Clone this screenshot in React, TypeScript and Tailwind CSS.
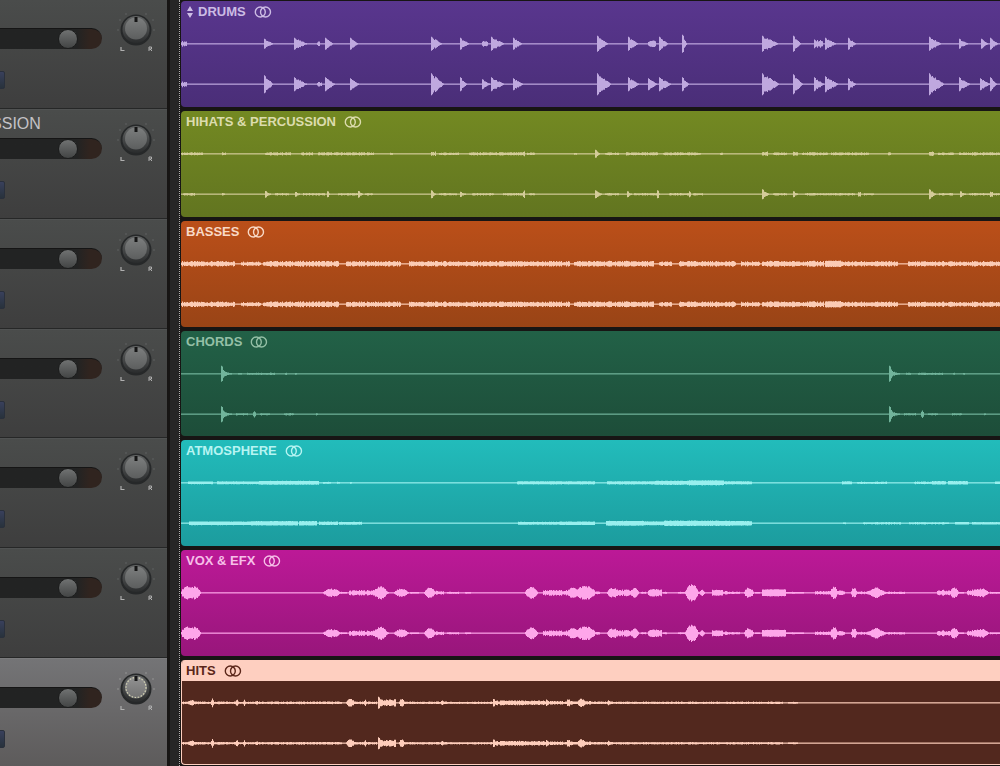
import React, { useState } from 'react';

type Shape = 'hit' | 'blob' | 'hum' | 'pad';

// [x, width, half height, shape]
type Burst = [number, number, number, Shape];

interface Track {
  id: string;
  name: string;
  mixerLabel?: string;
  rowHeight: string;
  region: string;
  header: string;
  wave: string;
  left: Burst[];
  right: Burst[];
  grouped?: boolean;
  selected?: boolean;
}

const basses: Burst[] = [
  [0, 54, 2.8, 'hum'], [60, 20, 2.6, 'hum'], [82, 76, 3, 'hum'], [165, 55, 2.8, 'hum'],
  [228, 161, 2.8, 'hum'], [393, 80, 3, 'hum'], [478, 13, 2.4, 'hum'], [498, 57, 2.9, 'hum'],
  [560, 19, 2.6, 'hum'], [581, 62, 3, 'hum'], [644, 16, 3.2, 'pad'], [660, 57, 2.7, 'hum'],
  [727, 94, 2.7, 'hum'],
];

const vox: Burst[] = [
  [0, 13, 7, 'blob'], [7, 13, 6, 'blob'], [142, 18, 4, 'blob'], [160, 6, 1, 'hum'], [168, 25, 2.8, 'hum'],
  [188, 20, 4, 'blob'], [194, 12, 7, 'blob'], [213, 15, 4, 'blob'], [229, 9, 1, 'hum'], [243, 12, 5, 'blob'],
  [255, 8, 2, 'hum'], [266, 12, 1.2, 'hum'], [284, 6, 1, 'hum'], [344, 13, 6, 'blob'], [362, 28, 3, 'hum'],
  [387, 11, 6, 'blob'], [394, 21, 7, 'blob'], [414, 5, 1.5, 'hum'], [426, 13, 5, 'blob'], [438, 16, 3.4, 'hum'],
  [450, 8, 5, 'blob'], [460, 5, 1, 'hum'], [467, 14, 4, 'hum'], [482, 4, 1, 'hum'], [497, 7, 1, 'hum'],
  [504, 14, 8, 'blob'], [518, 6, 3, 'blob'], [531, 11, 3, 'pad'], [542, 5, 2, 'hum'], [544, 15, 1.2, 'hum'],
  [563, 10, 5, 'blob'], [574, 5, 1, 'hum'], [581, 24, 3.6, 'pad'], [605, 18, 1, 'hum'], [634, 15, 2, 'hum'],
  [649, 8, 6, 'blob'], [657, 7, 2.4, 'hum'], [670, 6, 5, 'blob'], [676, 8, 1.5, 'hum'], [684, 22, 3.4, 'blob'],
  [688, 14, 5, 'blob'], [706, 18, 1.2, 'hum'], [756, 13, 3, 'hum'], [769, 9, 5.4, 'blob'], [778, 5, 1, 'hum'],
  [786, 9, 3.4, 'hum'], [792, 16, 4.4, 'blob'], [809, 14, 1, 'hum'],
];

const hits: Burst[] = [
  [0, 160, 1.4, 'hum'], [5, 9, 2.6, 'blob'], [29, 3, 4, 'blob'], [53, 4, 3, 'blob'], [61, 3, 3, 'blob'],
  [72, 5, 2, 'blob'], [164, 9, 4, 'blob'], [173, 22, 1.4, 'hum'], [182, 3, 3, 'blob'], [196, 9, 6, 'hit'],
  [199, 10, 3.4, 'hum'], [209, 5, 4, 'hum'], [217, 6, 4, 'blob'], [223, 42, 1.3, 'hum'], [258, 5, 2.4, 'blob'],
  [265, 46, 1.2, 'hum'], [311, 2, 5, 'blob'], [313, 54, 2.5, 'hum'], [363, 4, 3.4, 'blob'], [367, 18, 1.8, 'hum'],
  [384, 5, 3.6, 'blob'], [389, 20, 2, 'hum'], [395, 9, 4, 'blob'], [409, 24, 1.4, 'hum'], [425, 3, 2.6, 'blob'],
  [433, 168, 1.2, 'hum'], [606, 10, 1, 'hum'],
];

const tracks: Track[] = [
  {
    id: 'drums',
    name: 'DRUMS',
    grouped: true,
    rowHeight: 'h-[110px]',
    region: 'bg-linear-to-b from-[#59368e] to-[#4a2e78]',
    header: 'pl-[5px] text-[#ccbce4]',
    wave: 'text-[#bfa8df]',
    left: [
      [0, 6, 3, 'hum'], [83, 9, 5, 'hit'], [113, 13, 6, 'hit'], [136, 3, 2.4, 'hum'], [144, 8, 6, 'hit'],
      [169, 8, 6, 'hit'], [250, 11, 7, 'hit'], [279, 9, 6, 'hit'], [301, 6, 3, 'hum'], [310, 13, 7, 'hit'],
      [332, 9, 6, 'hit'], [416, 11, 8, 'hit'], [447, 10, 7, 'hit'], [467, 8, 3.4, 'hum'], [478, 9, 7, 'hit'],
      [501, 5, 9, 'hit'], [581, 16, 8, 'hit'], [612, 8, 8, 'hit'], [633, 9, 4.4, 'hum'], [644, 11, 6, 'hit'],
      [667, 8, 6, 'hit'], [748, 12, 7, 'hit'], [778, 9, 5, 'hit'], [800, 7, 5, 'hit'], [809, 8, 6, 'hit'],
    ],
    right: [
      [0, 6, 3, 'hum'], [83, 9, 9, 'hit'], [113, 13, 7, 'hit'], [136, 5, 2.4, 'hum'], [144, 10, 7, 'hit'],
      [169, 9, 6, 'hit'], [250, 13, 11, 'hit'], [279, 7, 7, 'hit'], [301, 8, 5, 'hit'], [310, 13, 7, 'hit'],
      [332, 10, 6, 'hit'], [416, 14, 11, 'hit'], [447, 11, 7, 'hit'], [467, 9, 6, 'hit'], [478, 12, 7, 'hit'],
      [501, 7, 7, 'hit'], [581, 17, 11, 'hit'], [612, 10, 10, 'hit'], [633, 10, 7, 'hit'], [644, 13, 8, 'hit'],
      [667, 8, 6, 'hit'], [748, 15, 11, 'hit'], [778, 11, 7, 'hit'], [799, 10, 6, 'hit'], [809, 7, 7, 'hit'],
    ],
  },
  {
    id: 'hihats',
    name: 'HIHATS & PERCUSSION',
    mixerLabel: 'HIHATS & PERCUSSION',
    rowHeight: 'h-[110px]',
    region: 'bg-linear-to-b from-[#738922] to-[#627520]',
    header: 'pl-[5px] text-[#dcdcae]',
    wave: 'text-[#d3cb98]',
    left: [
      [0, 22, 1.5, 'hum'], [41, 4, 1.5, 'hum'], [84, 26, 1.6, 'hum'], [120, 12, 1.6, 'hum'], [137, 56, 1.6, 'hum'],
      [209, 3, 1.4, 'hum'], [250, 5, 2.2, 'hum'], [258, 20, 1.4, 'hum'], [288, 54, 1.6, 'hum'], [342, 2, 2.6, 'hum'],
      [346, 8, 1.4, 'hum'], [393, 3, 1.4, 'hum'], [414, 5, 4, 'hit'], [424, 14, 1.4, 'hum'], [445, 32, 1.6, 'hum'],
      [482, 38, 1.5, 'hum'], [539, 3, 1.6, 'hum'], [581, 6, 2.4, 'hum'], [592, 14, 1.4, 'hum'], [612, 5, 2.2, 'hum'],
      [621, 26, 1.6, 'hum'], [650, 38, 1.5, 'hum'], [707, 3, 1.6, 'hum'], [748, 5, 2.6, 'hum'], [757, 16, 1.4, 'hum'],
      [778, 42, 1.6, 'hum'],
    ],
    right: [
      [2, 12, 1.4, 'hum'], [41, 3, 1.4, 'hum'], [84, 6, 3.4, 'hit'], [94, 14, 1.2, 'hum'], [114, 5, 2.4, 'hit'],
      [122, 22, 1.2, 'hum'], [146, 3, 3, 'hit'], [157, 20, 1.2, 'hum'], [177, 5, 3.4, 'hit'], [184, 8, 1.2, 'hum'],
      [250, 5, 4, 'hit'], [258, 18, 1.2, 'hum'], [279, 6, 2.6, 'hit'], [291, 22, 1.2, 'hum'], [322, 20, 1.2, 'hum'],
      [342, 2, 4, 'hum'], [348, 6, 1.2, 'hum'], [414, 7, 4, 'hit'], [424, 14, 1.2, 'hum'], [446, 5, 3, 'hit'],
      [453, 24, 1.2, 'hum'], [476, 3, 4, 'hit'], [488, 20, 1.2, 'hum'], [508, 2, 3, 'hum'], [512, 10, 1.2, 'hum'],
      [581, 7, 5, 'hit'], [592, 14, 1.2, 'hum'], [612, 5, 3, 'hit'], [624, 50, 1.2, 'hum'], [677, 3, 3, 'hum'],
      [683, 10, 1.2, 'hum'], [748, 7, 5, 'hit'], [758, 14, 1.2, 'hum'], [779, 6, 3, 'hit'], [788, 32, 1.2, 'hum'],
      [809, 3, 2.6, 'hum'],
    ],
  },
  {
    id: 'basses',
    name: 'BASSES',
    rowHeight: 'h-[110px]',
    region: 'bg-linear-to-b from-[#bb4f19] to-[#994416]',
    header: 'pl-[5px] text-[#f8d9c6]',
    wave: 'text-[#fbcbb4]',
    left: basses,
    right: basses,
  },
  {
    id: 'chords',
    name: 'CHORDS',
    rowHeight: 'h-[109px]',
    region: 'bg-linear-to-b from-[#226147] to-[#1d4d39]',
    header: 'pl-[5px] text-[#94bfa6]',
    wave: 'text-[#71b49b]',
    left: [
      [40, 5, 8, 'hit'], [42, 9, 3, 'hit'], [57, 4, 1.2, 'hum'], [66, 28, 1.2, 'hum'], [104, 2, 1.2, 'hum'], [114, 2, 1.2, 'hum'],
      [708, 5, 8, 'hit'], [710, 9, 3, 'hit'], [725, 5, 1.2, 'hum'], [737, 25, 1.2, 'hum'], [772, 2, 1.2, 'hum'], [782, 2, 1.2, 'hum'],
    ],
    right: [
      [40, 5, 8, 'hit'], [42, 9, 3, 'hit'], [55, 12, 1.2, 'hum'], [72, 3, 4, 'blob'], [79, 10, 1.2, 'hum'], [103, 10, 1.2, 'hum'],
      [135, 2, 1.2, 'hum'], [708, 5, 8, 'hit'], [710, 9, 3, 'hit'], [723, 12, 1.2, 'hum'], [740, 3, 4, 'blob'],
      [747, 10, 1.2, 'hum'], [771, 10, 1.2, 'hum'], [803, 2, 1.2, 'hum'],
    ],
  },
  {
    id: 'atmosphere',
    name: 'ATMOSPHERE',
    rowHeight: 'h-[110px]',
    region: 'bg-linear-to-b from-[#22bcbb] to-[#1c9c9e]',
    header: 'pl-[5px] text-[#b6f4f2]',
    wave: 'text-[#98efee]',
    left: [
      [7, 25, 1.4, 'pad'], [36, 42, 1.5, 'pad'], [78, 60, 2, 'pad'], [142, 8, 1, 'hum'], [156, 3, 1, 'hum'], [169, 2, 1, 'hum'],
      [336, 78, 1.6, 'pad'], [426, 50, 1.6, 'pad'], [474, 34, 2.1, 'pad'], [508, 35, 2.6, 'pad'], [543, 28, 1.6, 'pad'],
      [661, 10, 1.6, 'pad'], [676, 30, 1.2, 'hum'], [733, 20, 1.4, 'hum'], [751, 14, 1.8, 'pad'], [767, 20, 1.8, 'pad'],
      [814, 8, 1.4, 'pad'],
    ],
    right: [
      [8, 62, 1.9, 'pad'], [70, 47, 2.3, 'pad'], [118, 18, 2.3, 'pad'], [138, 19, 1.7, 'pad'], [158, 23, 1.5, 'pad'],
      [337, 42, 1.5, 'pad'], [379, 35, 1.8, 'pad'], [425, 38, 2.5, 'pad'], [463, 20, 2, 'pad'], [483, 66, 2.7, 'pad'],
      [549, 22, 2.4, 'pad'], [662, 3, 1, 'hum'], [682, 38, 1.2, 'hum'], [728, 40, 1.2, 'hum'], [774, 14, 1.4, 'pad'],
      [791, 30, 1.2, 'pad'],
    ],
  },
  {
    id: 'vox',
    name: 'VOX & EFX',
    rowHeight: 'h-[110px]',
    region: 'bg-linear-to-b from-[#bc1997] to-[#98167b]',
    header: 'pl-[5px] text-[#f6bfe8]',
    wave: 'text-[#fea6ea]',
    left: vox,
    right: vox,
  },
  {
    id: 'hits',
    name: 'HITS',
    selected: true,
    rowHeight: 'h-[110px]',
    region: 'border-b border-l border-[#fecfc0] bg-[#52281e]',
    header: 'bg-[#fecfc0] pl-1 text-[#5a2619]',
    wave: 'text-[#fecdbb]',
    left: hits,
    right: hits,
  },
];

// Repeatable noise, so a waveform looks the same on every render
const noise = (n: number) => {
  const v = Math.sin(n * 12.9898) * 43758.5453;
  return v - Math.floor(v);
};

const amplitude = (shape: Shape, t: number, i: number, seed: number) => {
  if (shape === 'hit') {
    return i < 2 ? 1 - i * 0.1 : Math.pow(1 - t, 0.8) * (0.7 + 0.3 * noise(seed));
  }
  if (shape === 'blob') {
    return Math.pow(Math.sin(Math.PI * t), 0.7) * (0.75 + 0.35 * noise(seed));
  }
  if (shape === 'pad') {
    return 0.85 + 0.15 * noise(seed);
  }
  return 0.5 + 0.5 * noise(seed);
};

const wavePath = (bursts: Burst[], y: number) => {
  let d = '';
  bursts.forEach(([x, width, size, shape]) => {
    for (let i = 0; i < width; i++) {
      const a = Math.max(0.8, size * amplitude(shape, (i + 0.5) / width, i, x + i));
      d += `M${x + i} ${(y - a).toFixed(1)}h1v${(a * 2).toFixed(1)}h-1z`;
    }
  });
  return d;
};

const StereoIcon: React.FC = () => (
  <svg className="h-3 w-[18px]" viewBox="0 0 18 12" fill="none" stroke="currentColor" strokeWidth="1.4" aria-hidden="true">
    <circle cx="6.300" cy="6" r="5" />
    <circle cx="11.500" cy="6" r="5" />
  </svg>
);

const GroupIcon: React.FC = () => (
  <svg className="mr-1 h-3 w-2" viewBox="0 0 8 12" fill="currentColor" aria-hidden="true">
    <path d="M4 0L7 5H1zM4 12L1 7h6z" />
  </svg>
);

const PanKnob: React.FC<{ track: Track }> = ({ track }) => (
  <button type="button" aria-label={`${track.name} pan`} className="h-[42px] w-10 shrink-0">
    <svg className="h-[42px] w-10" viewBox="0 0 40 42">
      <defs>
        <linearGradient id={`rim-${track.id}`} x1="0" y1="0" x2="0" y2="1">
          <stop offset="0" stopColor="#626464" />
          <stop offset="1" stopColor="#2a2c2d" />
        </linearGradient>
        <linearGradient id={`face-${track.id}`} x1="0" y1="0" x2="0" y2="1">
          <stop offset="0" stopColor={track.selected ? '#929292' : '#7c7e7e'} />
          <stop offset="1" stopColor={track.selected ? '#727272' : '#5c5e5e'} />
        </linearGradient>
      </defs>
      <g fill={track.selected ? '#9a9a9a' : '#636565'}>
        <circle cx="4" cy="9" r="0.8" />
        <circle cx="10" cy="3" r="0.8" />
        <circle cx="30" cy="3" r="0.8" />
        <circle cx="37" cy="9" r="0.8" />
        <circle cx="38" cy="19" r="0.8" />
        <circle cx="2" cy="19" r="0.8" />
      </g>
      <circle cx="20" cy="19" r="15.5" fill="#262829" />
      <circle cx="20" cy="18.500" r="13.5" fill={`url(#rim-${track.id})`} />
      <circle cx="20" cy="17.500" r="11" fill={`url(#face-${track.id})`} />
      {track.selected && (
        <circle cx="20" cy="17.500" r="10" fill="none" stroke="#d4d4b4" strokeWidth="1.2" strokeDasharray="1.5 1.6" />
      )}
      <path d="M18.5 6h3v5h-3z" fill="#151515" />
      <path d="M5 36v3.500h3.500" fill="none" stroke="#b0b0b0" strokeWidth="1.2" />
      <path d="M33 40v-4h2.500v2h-2.500M34 38l2 2" fill="none" stroke="#b0b0b0" strokeWidth="1" />
    </svg>
  </button>
);

const MixerRow: React.FC<{ track: Track }> = ({ track }) => {
  const [volume, setVolume] = useState(114);

  return (
    <div
      className={`flex shrink-0 justify-end overflow-hidden border-t border-b border-b-[#262727] bg-linear-to-b ${track.rowHeight} ${
        track.selected ? 'border-t-[#7b7b7d] from-[#747476] to-[#5d5b5b]' : 'border-t-[#505252] from-[#4a4c4b] to-[#3e3e3e]'
      }`}
    >
      <div className="flex w-[250px] shrink-0 flex-col">
        <div className="mt-1 h-5 pl-1.5 text-base leading-5 whitespace-nowrap text-[#c4c2c6]">{track.mixerLabel}</div>
        <input
          type="range"
          min={0}
          max={127}
          value={volume}
          onChange={(e) => setVolume(Number(e.target.value))}
          aria-label={`${track.name} volume`}
          className="mt-1 block h-[21px] w-full appearance-none rounded-full border-t border-[#151515] bg-linear-to-r from-[#222323] from-90% to-[#30241f] to-95% [&::-webkit-slider-thumb]:h-5 [&::-webkit-slider-thumb]:w-5 [&::-webkit-slider-thumb]:appearance-none [&::-webkit-slider-thumb]:rounded-full [&::-webkit-slider-thumb]:border [&::-webkit-slider-thumb]:border-[#1c1d1d] [&::-webkit-slider-thumb]:bg-linear-to-b [&::-webkit-slider-thumb]:from-[#707272] [&::-webkit-slider-thumb]:to-[#434545]"
        />
        <button
          type="button"
          aria-label={`${track.name} input`}
          className="mt-[22px] mr-[97px] h-[18px] w-5 self-end rounded-xs border border-[#2a303c] bg-linear-to-b from-[#39405c] to-[#28323c]"
        />
      </div>
      <div className="shrink-0 pt-[11px] pr-[11px] pl-[14px]">
        <PanKnob track={track} />
      </div>
    </div>
  );
};

const Region: React.FC<{ track: Track }> = ({ track }) => (
  <div className={`shrink-0 pb-1 ${track.selected ? 'h-[109px]' : track.rowHeight}`}>
    <div className={`flex h-full flex-col overflow-hidden rounded-l ${track.region}`}>
      <div className={`flex h-[21px] shrink-0 items-center text-[13px] leading-5 font-bold ${track.header}`}>
        {track.grouped && <GroupIcon />}
        <span className="mr-2">{track.name}</span>
        <StereoIcon />
      </div>
      <svg className={`h-[84px] w-full shrink-0 ${track.wave}`} fill="currentColor" aria-hidden="true">
        <rect x="0" y="21" width="100%" height="1.600" opacity="0.750" />
        <rect x="0" y="61.400" width="100%" height="1.600" opacity="0.750" />
        <path d={wavePath(track.left, 21.8)} />
        <path d={wavePath(track.right, 62.3)} />
      </svg>
    </div>
  </div>
);

const App: React.FC = () => {
  return (
    <div className="flex h-screen overflow-hidden bg-[#171514] font-['Liberation_Sans',Arial,sans-serif]">
      <aside className="-mt-px flex w-[167px] shrink-0 flex-col">
        {tracks.map((track) => (
          <MixerRow key={track.id} track={track} />
        ))}
      </aside>
      <div className="ml-[3px] w-[9px] shrink-0 bg-[#262626]" />
      <main className="flex min-w-0 flex-1 flex-col border-l border-dotted border-[#b4b4b4] pt-px pl-px">
        {tracks.map((track) => (
          <Region key={track.id} track={track} />
        ))}
      </main>
    </div>
  );
};

export default App;
